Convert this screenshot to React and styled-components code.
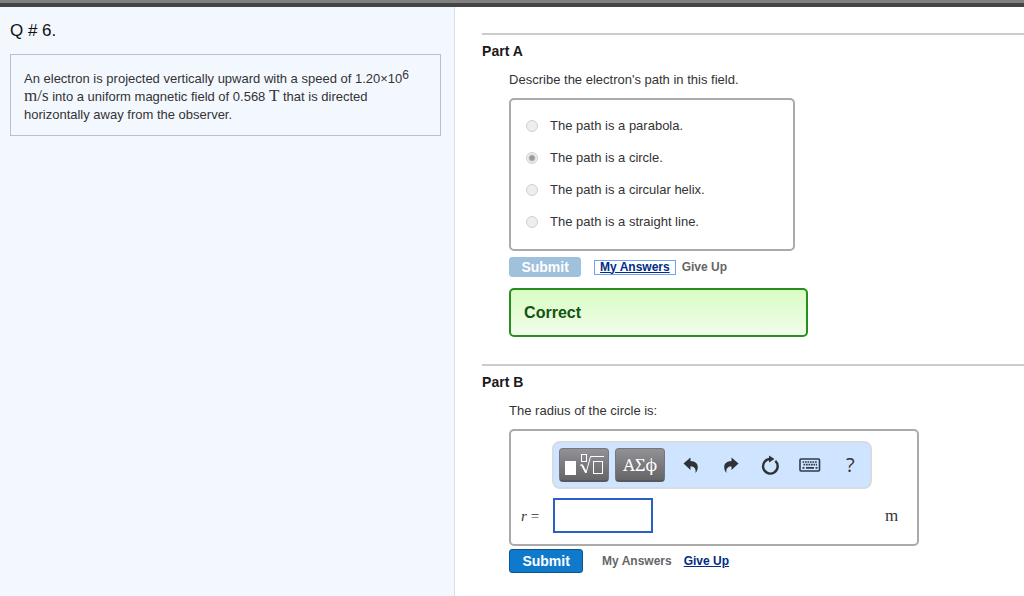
import React, { useState } from "react";
import styled, { createGlobalStyle, css } from "styled-components";

const pathOptions = [
  { id: "parabola", label: "The path is a parabola." },
  { id: "circle", label: "The path is a circle." },
  { id: "helix", label: "The path is a circular helix." },
  { id: "line", label: "The path is a straight line." },
];

const TemplatesIcon = () => (
  <svg width="42" height="24" viewBox="0 0 42 24" fill="none" stroke="#fff">
    <rect x="2" y="8" width="11" height="14" fill="#fff" stroke="none" />
    <rect x="18.5" y="1.5" width="5" height="7" />
    <path d="M17 12.500l2-1 4 8.500 4.500-16.500h13.500" />
    <path d="M19 12l4 7.500" strokeWidth="1.800" />
    <rect x="30.5" y="8.500" width="9" height="12" />
  </svg>
);

const UndoIcon = () => (
  <svg width="16" height="17" viewBox="0 0 16 17" fill="#2f3336">
    <path d="M.5 6.500L7.500.500v3.600c4.500.2 7.300 2.300 7.300 6.200 0 2.200-.8 4.200-2.300 5.700.6-4.100-.8-6.500-5-6.700v3.700z" />
  </svg>
);

const RedoIcon = () => (
  <svg width="16" height="17" viewBox="0 0 16 17" fill="#2f3336">
    <path d="M15.500 6.500L8.500.500v3.600C4 4.300 1.200 6.400 1.200 10.300c0 2.200.8 4.200 2.300 5.700-.6-4.100.8-6.500 5-6.700v3.700z" />
  </svg>
);

const ResetIcon = () => (
  <svg width="20" height="20" viewBox="0 0 20 20" fill="none">
    <path d="M9.500 4A7.300 7.300 0 1 0 14.300 5.900" stroke="#2f3336" strokeWidth="2.400" />
    <path d="M8 .5l5.500 3.500L8 7.500z" fill="#2f3336" />
  </svg>
);

const KeyboardIcon = () => (
  <svg width="22" height="14" viewBox="0 0 22 14" fill="none" stroke="#2f3a4c">
    <rect x="1" y="1" width="19.500" height="12" rx="1" strokeWidth="1.600" />
    <path d="M3.500 4h15" strokeWidth="1.700" strokeDasharray="1.700 .8" />
    <path d="M4.500 6.700h13.500" strokeWidth="1.700" strokeDasharray="1.700 .8" />
    <path d="M3.500 9.900h2M7 9.900h8M16.500 9.900h2" strokeWidth="1.700" />
  </svg>
);

const App = () => {
  const [path, setPath] = useState("circle");
  const [radius, setRadius] = useState("");

  return (
    <>
      <GlobalStyle />
      <Page>
        <TopBar />
        <Columns>
          <Problem>
            <QuestionTitle>Q # 6.</QuestionTitle>
            <Statement>
              An electron is projected vertically upward with a speed of 1.20×10
              <Exponent>6</Exponent> <Unit>m/s</Unit> into a uniform magnetic
              field of 0.568 <Unit>T</Unit> that is directed horizontally away
              from the observer.
            </Statement>
          </Problem>

          <Parts>
            <Part>
              <PartTitle>Part A</PartTitle>
              <PartBody>
                <Prompt id="path-prompt">
                  Describe the electron's path in this field.
                </Prompt>
                <Options role="radiogroup" aria-labelledby="path-prompt">
                  {pathOptions.map((option) => (
                    <Option key={option.id}>
                      <Radio
                        type="radio"
                        name="path"
                        value={option.id}
                        checked={path === option.id}
                        onChange={(event) => setPath(event.target.value)}
                        disabled
                      />
                      {option.label}
                    </Option>
                  ))}
                </Options>
                <Actions>
                  <Submit type="button" disabled>
                    Submit
                  </Submit>
                  <Links>
                    <ActionLink href="#answers" $focused>
                      My Answers
                    </ActionLink>
                    <Inactive>Give Up</Inactive>
                  </Links>
                </Actions>
                <Feedback>Correct</Feedback>
              </PartBody>
            </Part>

            <Part>
              <PartTitle>Part B</PartTitle>
              <PartBody>
                <Prompt>The radius of the circle is:</Prompt>
                <AnswerBox>
                  <Toolbar role="toolbar" aria-label="Equation tools">
                    <PaletteButton type="button" aria-label="Templates">
                      <TemplatesIcon />
                    </PaletteButton>
                    <PaletteButton type="button">ΑΣϕ</PaletteButton>
                    <Tools>
                      <ToolButton type="button" aria-label="Undo">
                        <UndoIcon />
                      </ToolButton>
                      <ToolButton type="button" aria-label="Redo">
                        <RedoIcon />
                      </ToolButton>
                      <ToolButton type="button" aria-label="Reset">
                        <ResetIcon />
                      </ToolButton>
                      <ToolButton type="button" aria-label="Keyboard">
                        <KeyboardIcon />
                      </ToolButton>
                      <ToolButton type="button">?</ToolButton>
                    </Tools>
                  </Toolbar>
                  <AnswerRow>
                    <Variable htmlFor="radius">
                      <i>r</i> =
                    </Variable>
                    <AnswerInput
                      id="radius"
                      type="text"
                      value={radius}
                      onChange={(event) => setRadius(event.target.value)}
                    />
                    <AnswerUnit>m</AnswerUnit>
                  </AnswerRow>
                </AnswerBox>
                <Actions $active>
                  <Submit type="button">Submit</Submit>
                  <Links $wide>
                    <Inactive>My Answers</Inactive>
                    <ActionLink href="#give-up">Give Up</ActionLink>
                  </Links>
                </Actions>
              </PartBody>
            </Part>
          </Parts>
        </Columns>
      </Page>
    </>
  );
};

export default App;

const GlobalStyle = createGlobalStyle`
  * {
    box-sizing: border-box;
  }
  body {
    margin: 0;
    background: #fff;
    color: #333;
    font: 13px/18px "Liberation Sans", Arial, sans-serif;
  }
`;

const Page = styled.div`
  min-height: 100vh;
  display: flex;
  flex-direction: column;
`;

const TopBar = styled.div`
  height: 7px;
  background: #808080;
  border-bottom: 4px solid #444;
`;

const Columns = styled.main`
  flex: 1;
  display: grid;
  grid-template-columns: minmax(0, 4fr) minmax(0, 5fr);
`;

const Problem = styled.section`
  padding: 12px 13px 12px 10px;
  background: #f3f8ff;
  border-right: 1px solid #d3e0ec;
`;

const QuestionTitle = styled.h1`
  margin: 0 0 12px;
  color: #111;
  font-size: 17px;
  font-weight: 400;
  line-height: 23px;
`;

const Statement = styled.p`
  margin: 0;
  padding: 15px 13px 11px;
  border: 1px solid #b0c2d4;
`;

const Exponent = styled.sup`
  font-size: 12px;
  line-height: 0;
  vertical-align: 4px;
`;

const Unit = styled.span`
  font-family: "Liberation Serif", serif;
  font-size: 17px;
  line-height: 16px;
`;

const Parts = styled.div`
  padding: 26px 0 0 27px;
`;

const Part = styled.section`
  border-top: 2px solid #ccc;
  padding-top: 7px;
  margin-bottom: 27px;
`;

const PartTitle = styled.h2`
  margin: 0;
  color: #1a1a1a;
  font-size: 14px;
  line-height: 18px;
`;

const PartBody = styled.div`
  padding: 11px 0 0 27px;
`;

const Prompt = styled.p`
  margin: 0 0 9px;
`;

const frame = css`
  border: 2px solid #aaa;
  border-radius: 5px;
`;

const Options = styled.div`
  ${frame}
  max-width: 286px;
  padding: 10px 15px 11px;
`;

const Option = styled.label`
  display: flex;
  align-items: center;
  gap: 12px;
  height: 32px;
`;

const Radio = styled.input`
  appearance: none;
  width: 12px;
  height: 12px;
  margin: 0;
  border: 1px solid #d0d0d0;
  border-radius: 50%;
  background: #eee;

  &:checked {
    background: radial-gradient(circle, #999 0 2px, #eee 4px);
  }
`;

const Actions = styled.div`
  display: flex;
  align-items: center;
  gap: ${(props) => (props.$active ? "19px" : "13px")};
  margin-top: ${(props) => (props.$active ? "3px" : "6px")};
`;

const Submit = styled.button`
  width: 74px;
  height: 24px;
  padding: 0;
  border: 1px solid #0b5590;
  border-radius: 3px;
  background: #0f79cb;
  color: #fff;
  font: bold 14px/18px "Liberation Sans", Arial, sans-serif;
  cursor: pointer;

  &:disabled {
    width: 72px;
    height: 20px;
    border-color: #9fc1dc;
    background: #9fc1dc;
    cursor: default;
  }
`;

const Links = styled.div`
  display: flex;
  align-items: center;
  gap: ${(props) => (props.$wide ? "12px" : "6px")};
  font-size: 12px;
  font-weight: 700;
  line-height: 13px;
`;

const ActionLink = styled.a`
  color: #002c83;
  ${(props) =>
    props.$focused &&
    css`
      padding: 0 5px;
      border: 1px solid #6ea3f5;
    `}
`;

const Inactive = styled.span`
  color: #666;
`;

const Feedback = styled.div`
  max-width: 299px;
  margin-top: 11px;
  padding: 13px;
  border: 2px solid #298e20;
  border-radius: 5px;
  background: linear-gradient(#d9fcc3, #f1fdea);
  color: #125512;
  font-size: 16px;
  font-weight: 700;
  line-height: 19px;
`;

const AnswerBox = styled.div`
  ${frame}
  max-width: 410px;
  padding: 10px 19px 11px 10px;
`;

const Toolbar = styled.div`
  display: flex;
  align-items: center;
  gap: 6px;
  width: 320px;
  height: 48px;
  margin-left: 31px;
  padding-left: 5px;
  border: 2px solid #d6dbe5;
  border-radius: 8px;
  background: #cfe5ff;
`;

const PaletteButton = styled.button`
  display: flex;
  align-items: center;
  justify-content: center;
  width: 50px;
  height: 34px;
  padding: 0;
  border: 1px solid #77777b;
  border-bottom: 2px solid #59595c;
  border-radius: 4px;
  background: linear-gradient(#929196, #656568);
  color: #fff;
  font: 18px/22px "Noto Serif", "DejaVu Serif", serif;
  font-size: 17px;
  cursor: pointer;
`;

const Tools = styled.div`
  flex: 1;
  display: flex;
`;

const ToolButton = styled.button`
  flex: 1;
  display: flex;
  align-items: center;
  justify-content: center;
  height: 34px;
  padding: 0;
  border: none;
  background: none;
  color: #2f3336;
  font: 20px/24px "Open Sans", sans-serif;
  cursor: pointer;
`;

const AnswerRow = styled.div`
  display: flex;
  align-items: center;
  margin-top: 9px;
`;

const Variable = styled.label`
  width: 32px;
  font: 15px/18px "Liberation Serif", serif;
`;

const AnswerInput = styled.input`
  width: 100px;
  height: 35px;
  padding: 0 6px;
  border: 2px solid #2b5fc4;
  background: #fff;
  font: inherit;
`;

const AnswerUnit = styled.span`
  margin-left: auto;
  font: 17px/18px "Liberation Serif", serif;
`;
